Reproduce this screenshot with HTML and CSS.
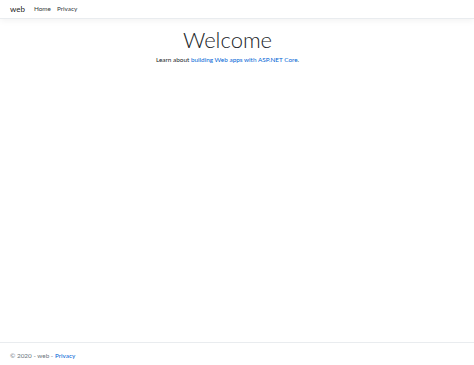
FILE: index.html
```html
<!DOCTYPE html>
<html lang="en">
 <head>
  <meta charset="utf-8">
  <title>Home Page - web</title>
  <link rel="stylesheet" href="styles.css">
 </head>
 <body>
  <header>
   <nav class="navbar">
    <a class="navbar-brand" href="#">web</a>
    <ul class="nav">
     <li><a class="nav-link" href="#">Home</a></li>
     <li><a class="nav-link" href="#">Privacy</a></li>
    </ul>
   </nav>
  </header>

  <main class="container">
   <div class="text-center">
    <h1 class="display-4">Welcome</h1>
    <p>Learn about <a href="#">building Web apps with ASP.NET Core</a>.</p>
   </div>
  </main>

  <footer class="footer">
   <div class="footer-inner">&copy; 2020 - web - <a href="#">Privacy</a></div>
  </footer>
 </body>
</html>
```

FILE: styles.css
```css
html { height: 100%; }
body {
  margin: 0;
  min-height: 100%;
  display: flex;
  flex-direction: column;
  font-family: Lato, "Noto Sans", sans-serif;
  font-size: 6.4px;
  line-height: 1.5;
  color: #212529;
  background: #fff;
}
a { color: #0366d6; text-decoration: none; }

.navbar {
  display: flex;
  align-items: center;
  height: 18px;
  padding: 0 8px 0 10px;
  border-bottom: 1px solid #e9ecef;
  box-shadow: 0 2px 6px rgba(0, 0, 0, .05);
  margin-bottom: 8px;
}
.navbar-brand {
  font-size: 8px;
  color: rgba(0, 0, 0, .9);
  margin-right: 6px;
}
.nav { display: flex; list-style: none; margin: 0; padding: 0; }
.nav-link { display: block; padding: 0 3px; color: #343a40; }

.container { flex: 1; padding-right: 19px; }
.text-center { text-align: center; }
.display-4 {
  font-size: 22px;
  font-weight: 300;
  line-height: 1.2;
  margin: 0 0 2px;
  color: #212529;
}
p { margin: 0; }

.footer {
  border-top: 1px solid #e9ecef;
  height: 22px;
  line-height: 25px;
  color: #6c757d;
}
.footer-inner { padding-left: 10px; }
```
